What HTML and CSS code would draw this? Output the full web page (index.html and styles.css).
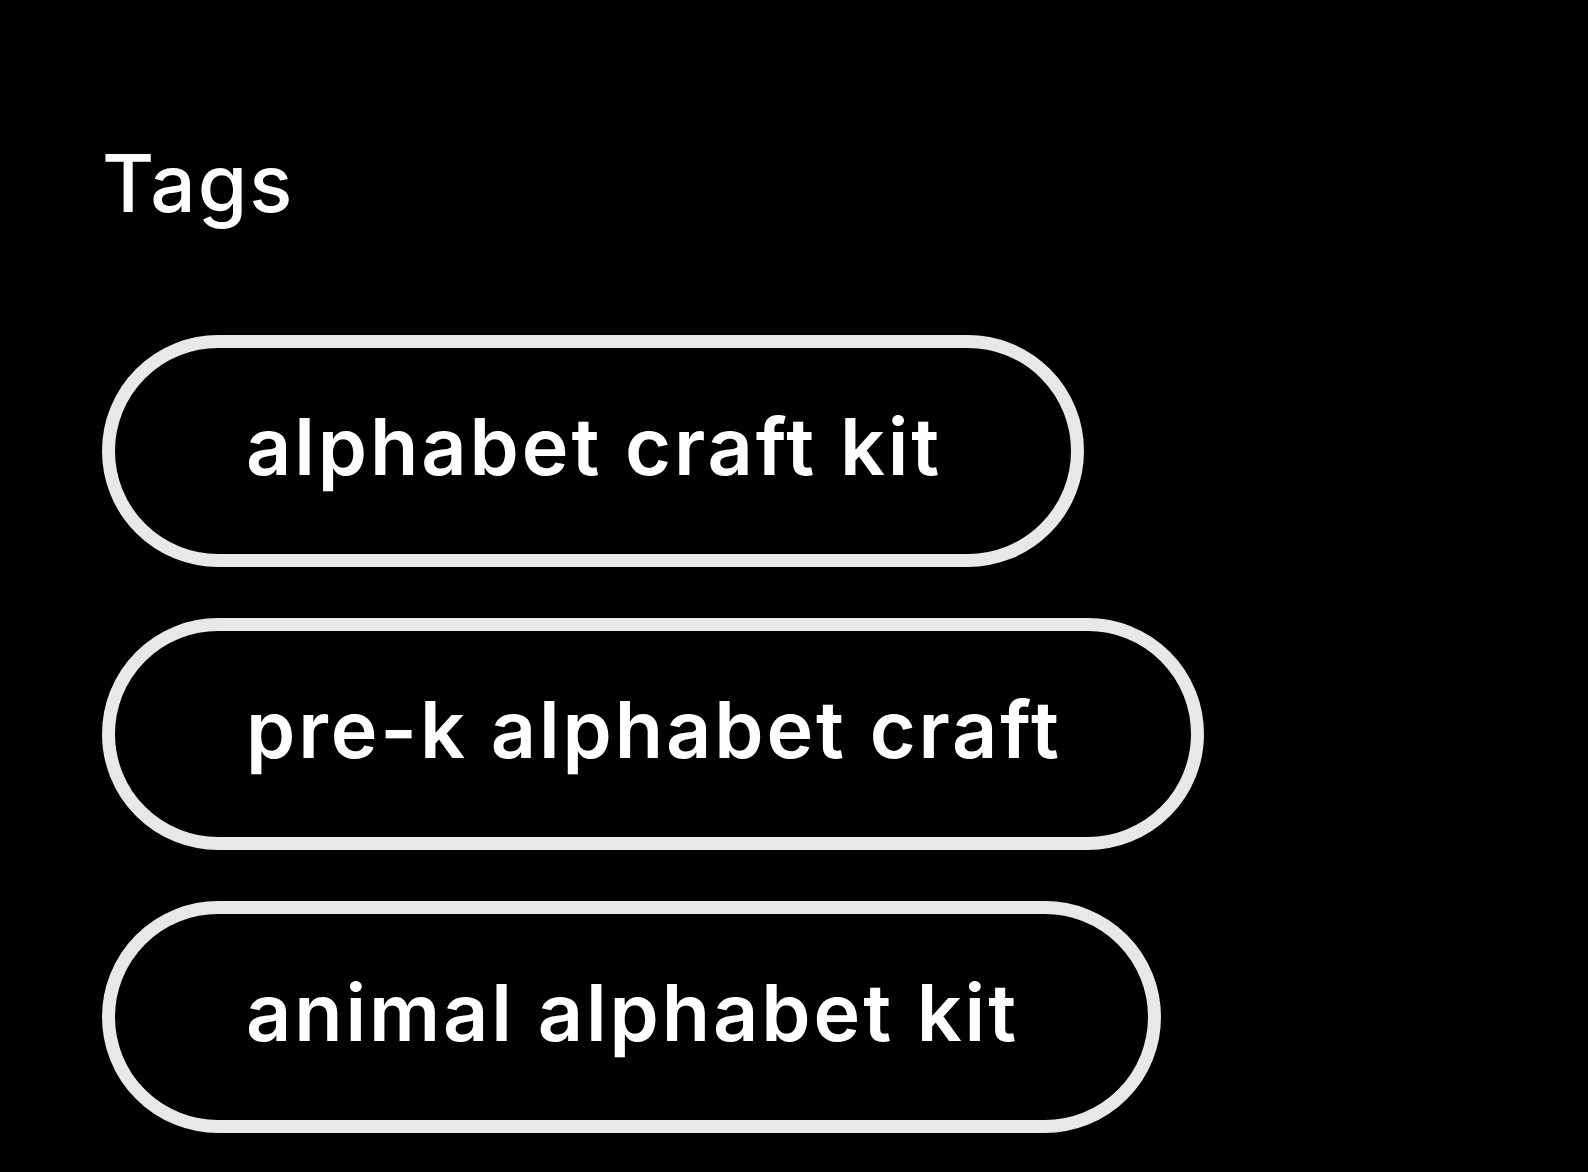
FILE: index.html
```html
<!DOCTYPE html>
<html>
<head>
<meta charset="utf-8">
<link rel="stylesheet" href="styles.css">
</head>
<body>
<section class="tags">
  <h2 class="tags-title">Tags</h2>
  <ul class="tag-list">
    <li><a class="tag" href="#">alphabet craft kit</a></li>
    <li><a class="tag" href="#">pre-k alphabet craft</a></li>
    <li><a class="tag" href="#">animal alphabet kit</a></li>
  </ul>
</section>
</body>
</html>
```
FILE: styles.css
```css
html, body {
  margin: 0;
  padding: 0;
  background: #000;
}
body {
  font-family: Inter, "Liberation Sans", sans-serif;
  color: #fff;
  width: 1588px;
  height: 1172px;
  overflow: hidden;
}
.tags {
  padding: 133px 0 0 102px;
}
.tags-title {
  margin: 0;
  font-size: 80px;
  font-weight: 500;
  line-height: 100px;
  letter-spacing: 2px;
}
.tag-list {
  list-style: none;
  margin: 102px 0 0 0;
  padding: 0;
  display: flex;
  flex-direction: column;
  align-items: flex-start;
  gap: 51px;
}
.tag {
  display: block;
  box-sizing: border-box;
  height: 232px;
  padding: 0 129px 10px 131px;
  border: 13px solid #e8e8e8;
  border-radius: 116px;
  color: #fff;
  text-decoration: none;
  font-size: 79px;
  font-weight: 600;
  letter-spacing: 2.9px;
  line-height: 196px;
  white-space: nowrap;
}
```
